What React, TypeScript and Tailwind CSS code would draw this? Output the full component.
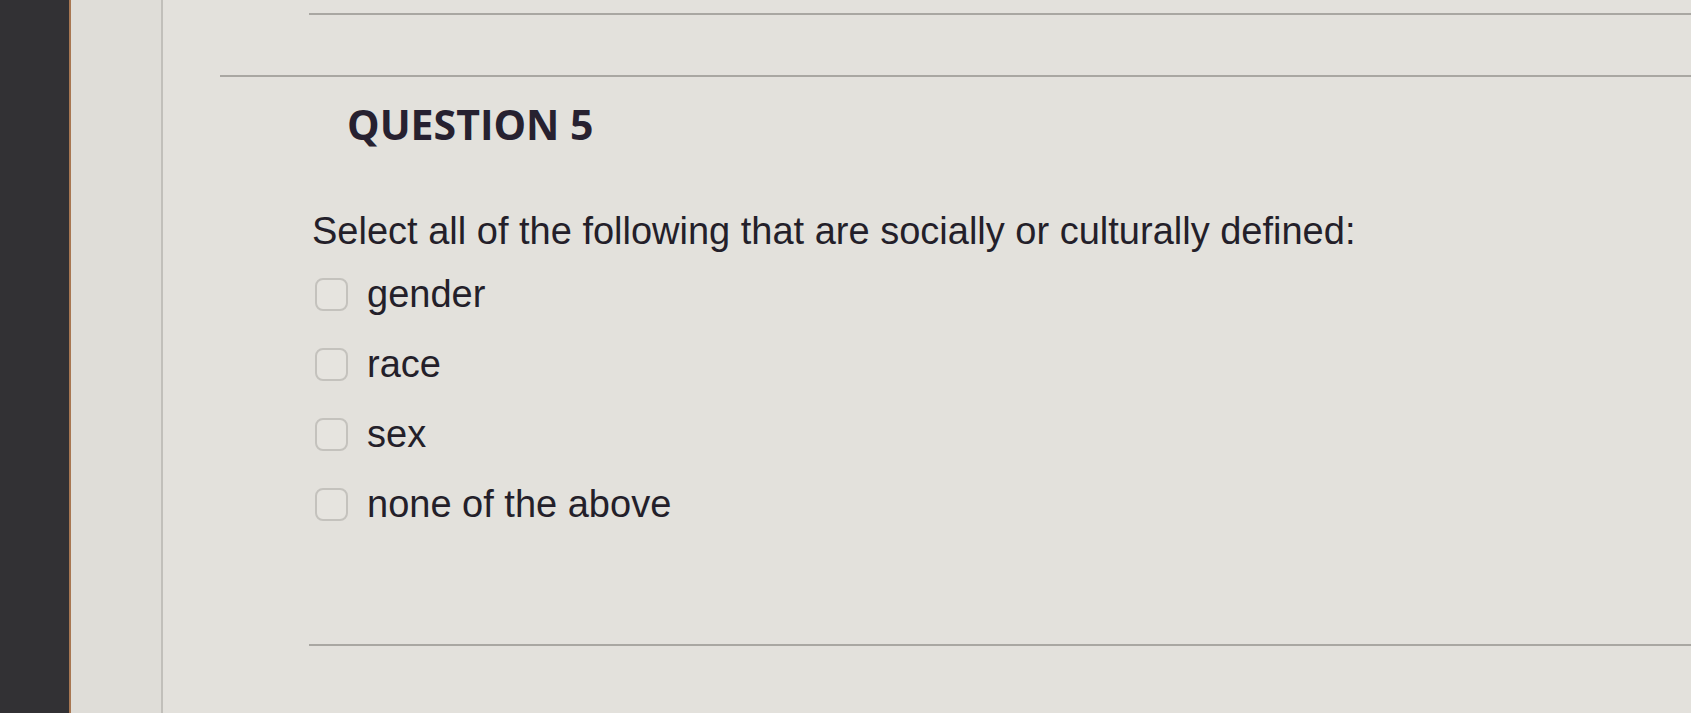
import { useState } from 'react'

const options = ['gender', 'race', 'sex', 'none of the above']

function Checkbox({ checked, onToggle }: { checked: boolean; onToggle: () => void }) {
  return (
    <button
      type="button"
      role="checkbox"
      aria-checked={checked}
      onClick={onToggle}
      className="w-[33px] h-[33px] shrink-0 rounded-[8px] border-2 border-[#c4c2bd] bg-[#e6e4df] flex items-center justify-center"
    >
      {checked && (
        <svg viewBox="0 0 24 24" className="w-5 h-5" fill="none" stroke="#241f2a" strokeWidth="3">
          <path d="M5 12l5 5 9-10" />
        </svg>
      )}
    </button>
  )
}

export default function App() {
  const [selected, setSelected] = useState<string[]>([])

  const toggle = (opt: string) =>
    setSelected((prev) => (prev.includes(opt) ? prev.filter((o) => o !== opt) : [...prev, opt]))

  return (
    <div className="flex h-[713px] w-full overflow-hidden bg-[#e3e1dc] font-['Liberation_Sans',Arial,sans-serif] text-[#241f2a]">
      {/* screen bezel */}
      <div className="w-[71px] shrink-0 bg-[#323134] border-r-2 border-[#a87752]" />

      {/* left gutter */}
      <div className="w-[92px] shrink-0 bg-[#dfddd8] border-r-2 border-[#c1bfba]" />

      {/* question panel */}
      <div className="flex-1 flex flex-col">
        <div className="mt-[13px] ml-[146px] h-[2px] bg-[#a9a7a2]" />
        <div className="mt-[60px] ml-[57px] h-[2px] bg-[#a9a7a2]" />

        <h2 className="mt-[27px] ml-[184px] font-['Open_Sans',sans-serif] font-bold text-[41px] leading-[41px] text-[#272130]">
          QUESTION 5
        </h2>

        <p className="mt-[67px] ml-[149px] text-[38px] leading-[38px]">
          Select all of the following that are socially or culturally defined:
        </p>

        <div className="mt-[28px] ml-[152px] flex flex-col gap-[37px]">
          {options.map((opt) => (
            <label key={opt} className="flex items-center h-[33px] gap-[19px] cursor-pointer">
              <Checkbox checked={selected.includes(opt)} onToggle={() => toggle(opt)} />
              <span className="text-[38px] leading-[33px]" onClick={() => toggle(opt)}>
                {opt}
              </span>
            </label>
          ))}
        </div>

        <div className="mt-[123px] ml-[146px] h-[2px] bg-[#a9a7a2]" />
      </div>
    </div>
  )
}
